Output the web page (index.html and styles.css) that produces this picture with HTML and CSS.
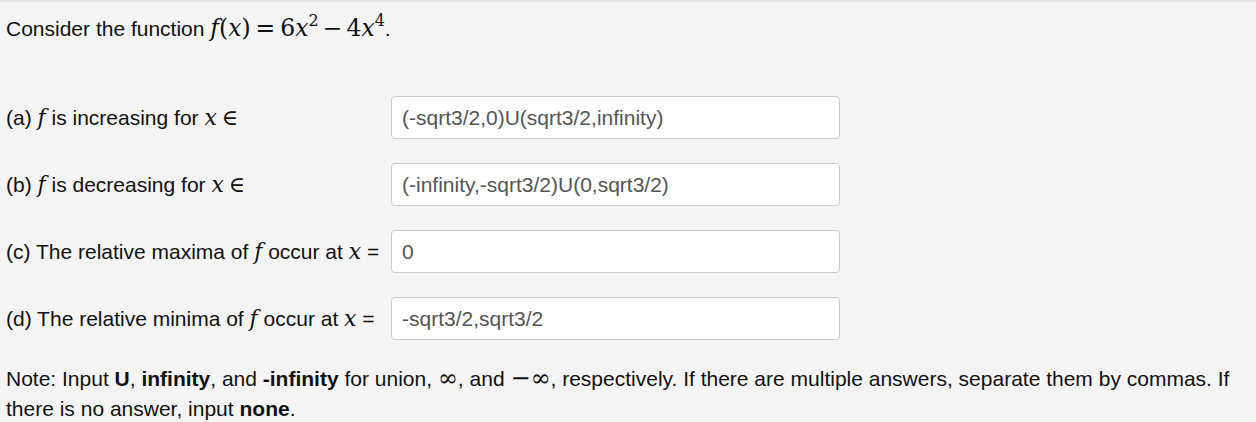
FILE: index.html
```html
<!DOCTYPE html>
<html>
<head>
<meta charset="utf-8">
<title>Problem</title>
<link rel="stylesheet" href="styles.css">
</head>
<body>
<div class="problem">
  <p class="intro">Consider the function <span class="math"><i>f</i>(<i>x</i>)<span class="rel">=</span>6<i>x</i><sup>2</sup><span class="bin">&minus;</span>4<i>x</i><sup>4</sup></span>.</p>

  <div class="row">
    <label class="lbl">(a) <span class="math"><i>f</i></span> is increasing for <span class="math"><i>x</i><span class="rel">&isin;</span></span></label>
    <input class="answer" type="text" value="(-sqrt3/2,0)U(sqrt3/2,infinity)">
  </div>

  <div class="row">
    <label class="lbl">(b) <span class="math"><i>f</i></span> is decreasing for <span class="math"><i>x</i><span class="rel">&isin;</span></span></label>
    <input class="answer" type="text" value="(-infinity,-sqrt3/2)U(0,sqrt3/2)">
  </div>

  <div class="row">
    <label class="lbl">(c) The relative maxima of <span class="math"><i>f</i></span> occur at <span class="math"><i>x</i></span> =</label>
    <input class="answer" type="text" value="0">
  </div>

  <div class="row">
    <label class="lbl">(d) The relative minima of <span class="math"><i>f</i></span> occur at <span class="math"><i>x</i></span> =</label>
    <input class="answer" type="text" value="-sqrt3/2,sqrt3/2">
  </div>

  <p class="note">Note: Input <b>U</b>, <b>infinity</b>, and <b>-infinity</b> for union, <span class="math inf">&infin;</span>, and <span class="math inf">&minus;&infin;</span>, respectively. If there are multiple answers, separate them by commas. If there is no answer, input <b>none</b>.</p>
</div>
</body>
</html>
```

FILE: styles.css
```css
html, body { margin:0; padding:0; background:#f4f4f4; }
body { font-family:"Liberation Sans",Arial,sans-serif; font-size:21px; color:#111; box-shadow:inset 0 3px 3px -2px rgba(0,0,0,0.12); min-height:422px; }
.problem { padding:14px 12px 0 6px; }
.intro { margin:0 0 52px 0; line-height:30px; }
.intro .math { font-size:23.5px; }
.math { font-family:"DejaVu Serif","Liberation Serif",serif; font-size:22px; line-height:1; }
.math i { font-style:italic; }
.math sup { font-size:16px; line-height:0; vertical-align:10px; }
.rel { padding:0 5px; }
.bin { padding:0 4px; }
.inf { font-size:24px; }
.row { display:flex; align-items:center; margin-bottom:24px; line-height:30px; }
.lbl { width:385px; flex:none; white-space:nowrap; }
.answer { width:449px; height:43px; box-sizing:border-box; padding:0 10px; border:1px solid #ccc; border-radius:4px; background:#fff; font-family:"Liberation Sans",Arial,sans-serif; font-size:21px; color:#555; }
.note { margin:0; line-height:30px; }
.note b { font-weight:bold; }
```
